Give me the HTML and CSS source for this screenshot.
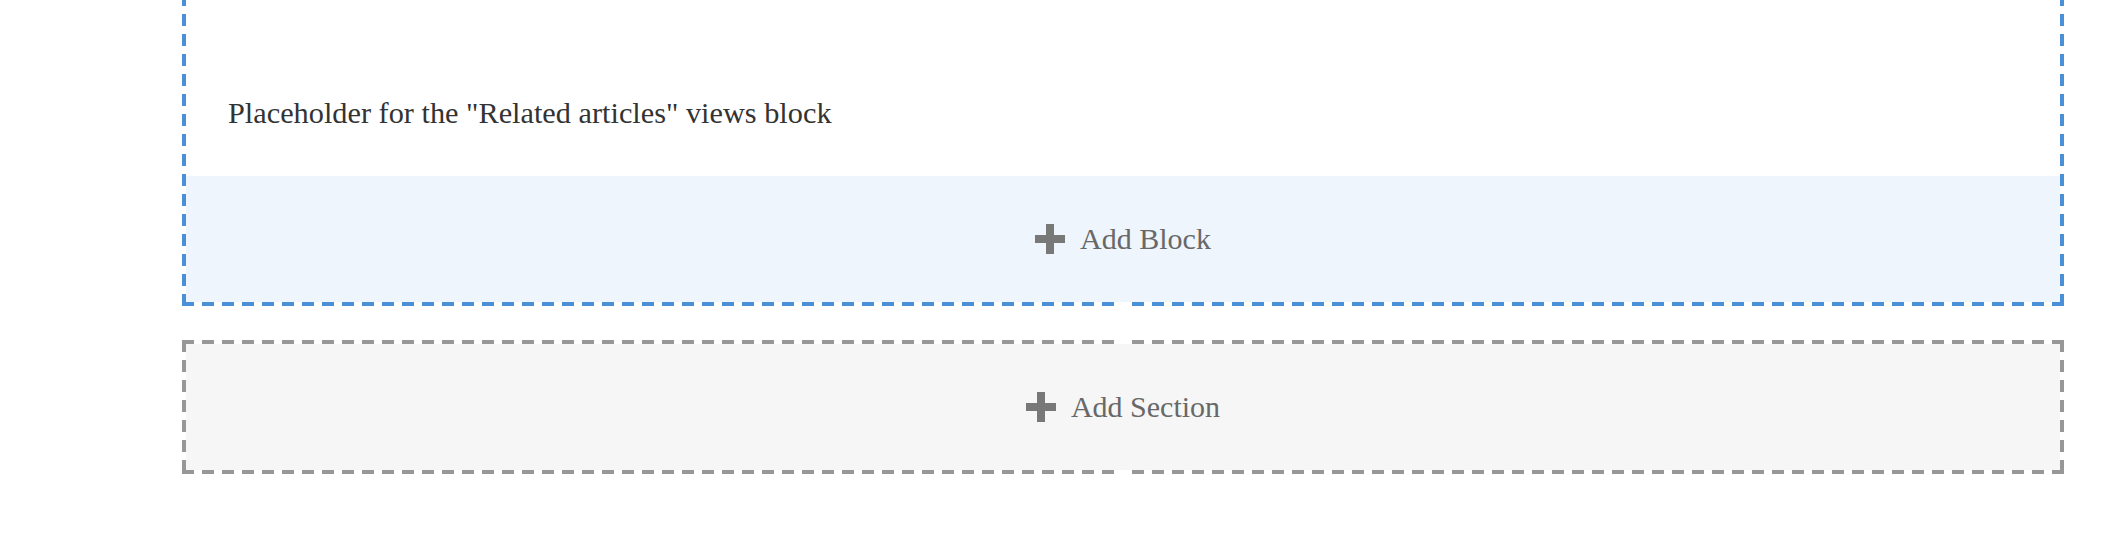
FILE: index.html
```html
<!DOCTYPE html>
<html lang="en">
<head>
<meta charset="utf-8">
<title>Layout Builder</title>
<link rel="stylesheet" href="styles.css">
</head>
<body>
<div class="layout">
  <div class="region">
    <div class="block">
      <p class="placeholder">Placeholder for the "Related articles" views block</p>
    </div>
    <div class="add-block">
      <a class="add-link" href="#">
        <svg class="plus" viewBox="0 0 30 30" aria-hidden="true"><path d="M11 0h8v11h11v8H19v11h-8V19H0v-8h11z"/></svg>
        <span>Add Block</span>
      </a>
    </div>
  </div>
  <div class="add-section">
    <a class="add-link" href="#">
      <svg class="plus" viewBox="0 0 30 30" aria-hidden="true"><path d="M11 0h8v11h11v8H19v11h-8V19H0v-8h11z"/></svg>
      <span>Add Section</span>
    </a>
  </div>
</div>
</body>
</html>
```
FILE: styles.css
```css
html, body {
  margin: 0;
  padding: 0;
  background: #ffffff;
}

body {
  font-family: "Liberation Serif", "DejaVu Serif", serif;
}

.layout {
  margin-left: 182px;
  width: 1882px;
}

/* dashed frame: 4px thick, 12px dash, 8px gap */
.region {
  --c: #4990d8;
  padding: 0 4px 4px;
  background:
    repeating-linear-gradient(to top, var(--c) 0 12px, transparent 12px 20px) left bottom / 4px 100% no-repeat,
    repeating-linear-gradient(to top, var(--c) 0 12px, transparent 12px 20px) right bottom / 4px 100% no-repeat,
    repeating-linear-gradient(to right, var(--c) 0 12px, transparent 12px 20px) left bottom / 932px 4px no-repeat,
    repeating-linear-gradient(to left, var(--c) 0 12px, transparent 12px 20px) right bottom / 932px 4px no-repeat;
}

.block {
  padding: 93px 42px 43px;
}

.placeholder {
  margin: 0;
  font-size: 30.3px;
  line-height: 40px;
  color: #333333;
}

.add-block {
  background: #eff5fc;
  height: 126px;
  display: flex;
  align-items: center;
  justify-content: center;
}

.add-section {
  --c: #979797;
  margin-top: 34px;
  padding: 4px;
  background:
    repeating-linear-gradient(to bottom, var(--c) 0 12px, transparent 12px 20px) left top / 4px 100% no-repeat,
    repeating-linear-gradient(to bottom, var(--c) 0 12px, transparent 12px 20px) right top / 4px 100% no-repeat,
    repeating-linear-gradient(to right, var(--c) 0 12px, transparent 12px 20px) left top / 932px 4px no-repeat,
    repeating-linear-gradient(to left, var(--c) 0 12px, transparent 12px 20px) right top / 932px 4px no-repeat,
    repeating-linear-gradient(to right, var(--c) 0 12px, transparent 12px 20px) left bottom / 932px 4px no-repeat,
    repeating-linear-gradient(to left, var(--c) 0 12px, transparent 12px 20px) right bottom / 932px 4px no-repeat;
}

.add-section .add-link {
  height: 126px;
  background: #f6f6f6;
}

.add-link {
  display: flex;
  align-items: center;
  justify-content: center;
  gap: 15px;
  color: #686868;
  text-decoration: none;
  font-size: 30px;
  line-height: 30px;
}

.plus {
  width: 30px;
  height: 30px;
  fill: #787878;
  flex: none;
}
```
